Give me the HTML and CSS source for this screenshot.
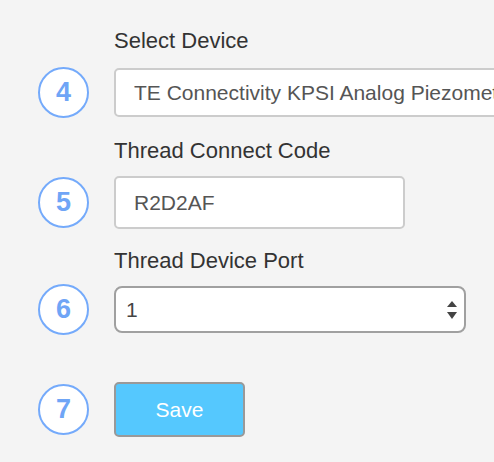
FILE: index.html
```html
<!DOCTYPE html>
<html lang="en">
<head>
    <meta charset="UTF-8">
    <meta name="viewport" content="width=device-width, initial-scale=1.0">
    <title>Device Setup</title>
    <link rel="stylesheet" href="styles.css">
</head>
<body>
    <form class="setup-form">
        <div class="field field-device">
            <label for="device">Select Device</label>
            <div class="row">
                <span class="step">4</span>
                <select id="device" class="control control-wide">
                    <option>TE Connectivity KPSI Analog Piezometer</option>
                </select>
            </div>
        </div>

        <div class="field field-code">
            <label for="code">Thread Connect Code</label>
            <div class="row">
                <span class="step">5</span>
                <input type="text" id="code" class="control control-code" value="R2D2AF">
            </div>
        </div>

        <div class="field field-port">
            <label for="port">Thread Device Port</label>
            <div class="row">
                <span class="step">6</span>
                <div class="select-wrap">
                    <select id="port" class="control control-port">
                        <option>1</option>
                        <option>2</option>
                    </select>
                    <svg class="select-arrows" width="10" height="18" viewBox="0 0 10 18">
                        <path d="M5 0 L10 6 L0 6 Z" fill="#444"/>
                        <path d="M0 11 L10 11 L5 18 Z" fill="#444"/>
                    </svg>
                </div>
            </div>
        </div>

        <div class="field field-save">
            <div class="row">
                <span class="step">7</span>
                <button type="submit" class="save-btn">Save</button>
            </div>
        </div>
    </form>
</body>
</html>
```

FILE: styles.css
```css
body {
    margin: 0;
    padding: 0;
    font-family: "Liberation Sans", Arial, sans-serif;
    background: #f4f4f4;
    overflow: hidden;
}

.setup-form {
    padding-top: 28px;
}

.field label {
    display: block;
    margin-left: 114px;
    font-size: 22px;
    line-height: 26px;
    color: #333;
}

.row {
    display: flex;
    align-items: center;
    gap: 25px;
    padding-left: 38px;
}

.step {
    flex: none;
    width: 47px;
    height: 47px;
    border: 2px solid #74aafb;
    border-radius: 50%;
    background: #fff;
    color: #6fa5f6;
    font-size: 27px;
    font-weight: bold;
    display: flex;
    justify-content: center;
    align-items: center;
}

.control {
    box-sizing: border-box;
    font-family: inherit;
    font-size: 21px;
    color: #555;
    background: #fff;
    border: 2px solid #ccc;
    border-radius: 5px;
    padding: 0 18px;
    margin: 0;
    outline: none;
}

.field-device .row {
    margin-top: 13px;
}

.control-wide {
    flex: none;
    width: 440px;
    height: 49px;
    -webkit-appearance: none;
    appearance: none;
}

.field-code {
    margin-top: 20px;
}

.field-code .row {
    margin-top: 12px;
}

.control-code {
    width: 291px;
    height: 53px;
}

.field-port {
    margin-top: 19px;
}

.field-port .row {
    margin-top: 10px;
}

.select-wrap {
    position: relative;
}

.control-port {
    width: 352px;
    height: 47px;
    padding: 0 10px;
    border: 2px solid #a0a0a0;
    border-radius: 8px;
    color: #444;
    -webkit-appearance: none;
    appearance: none;
}

.select-arrows {
    position: absolute;
    right: 9px;
    top: 15px;
}

.field-save {
    margin-top: 47px;
}

.save-btn {
    width: 131px;
    height: 55px;
    background: #55c8fe;
    color: #fff;
    font-family: inherit;
    font-size: 21px;
    border: 2px solid #999;
    border-radius: 5px;
    cursor: pointer;
}
```
